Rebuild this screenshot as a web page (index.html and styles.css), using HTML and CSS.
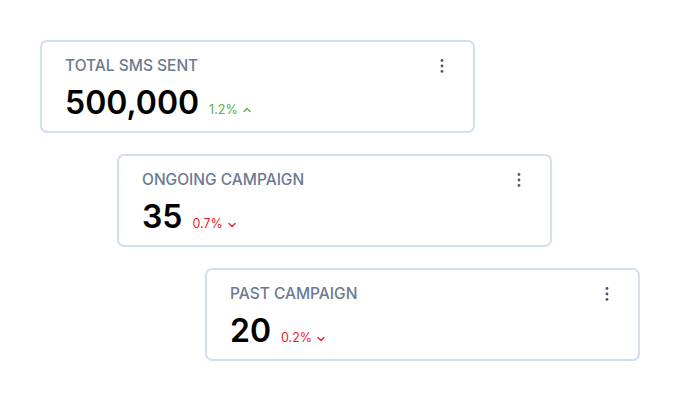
FILE: index.html
```html
<!DOCTYPE html>
<html>
<head>
<meta charset="utf-8">
<link rel="stylesheet" href="styles.css">
</head>
<body>
<div class="stack">
  <div class="card card-1">
    <div class="head">
      <span class="title">TOTAL SMS SENT</span>
      <svg class="more" width="10" height="16" viewBox="0 0 10 16"><circle cx="5" cy="2.5" r="1.4"/><circle cx="5" cy="8" r="1.4"/><circle cx="5" cy="13.4" r="1.4"/></svg>
    </div>
    <div class="value-row">
      <span class="value">500,000</span>
      <span class="delta up">1.2%<svg class="chev" width="8" height="6" viewBox="0 0 8 6"><path d="M1 4.5 L4 1.5 L7 4.5"/></svg></span>
    </div>
  </div>
  <div class="card card-2">
    <div class="head">
      <span class="title">ONGOING CAMPAIGN</span>
      <svg class="more" width="10" height="16" viewBox="0 0 10 16"><circle cx="5" cy="2.5" r="1.4"/><circle cx="5" cy="8" r="1.4"/><circle cx="5" cy="13.4" r="1.4"/></svg>
    </div>
    <div class="value-row">
      <span class="value">35</span>
      <span class="delta down">0.7%<svg class="chev" width="8" height="6" viewBox="0 0 8 6"><path d="M1 1.5 L4 4.5 L7 1.5"/></svg></span>
    </div>
  </div>
  <div class="card card-3">
    <div class="head">
      <span class="title">PAST CAMPAIGN</span>
      <svg class="more" width="10" height="16" viewBox="0 0 10 16"><circle cx="5" cy="2.5" r="1.4"/><circle cx="5" cy="8" r="1.4"/><circle cx="5" cy="13.4" r="1.4"/></svg>
    </div>
    <div class="value-row">
      <span class="value">20</span>
      <span class="delta down">0.2%<svg class="chev" width="8" height="6" viewBox="0 0 8 6"><path d="M1 1.5 L4 4.5 L7 1.5"/></svg></span>
    </div>
  </div>
</div>
</body>
</html>
```

FILE: styles.css
```css
html, body {
  margin: 0;
  padding: 0;
  background: #ffffff;
}
body {
  font-family: Inter, "Noto Sans", sans-serif;
  width: 682px;
  height: 400px;
  overflow: hidden;
}
.stack {
  display: flex;
  flex-direction: column;
  gap: 21px;
  padding-top: 40px;
}
.card {
  width: 435px;
  box-sizing: border-box;
  border: 2px solid #d3deee;
  border-radius: 7px;
  padding: 14px 26px 8px 23px;
  background: #fff;
}
.card-1 { margin-left: 40px; }
.card-2 { margin-left: 117px; }
.card-3 { margin-left: 205px; }
.head {
  display: flex;
  justify-content: space-between;
  align-items: center;
  height: 20px;
}
.title {
  font-size: 15.5px;
  line-height: 20px;
  color: #6b7a92;
  font-weight: 500;
}
.more {
  fill: #4d5669;
}
.value-row {
  display: flex;
  align-items: baseline;
  margin-top: 7px;
  height: 40px;
}
.value {
  font-size: 32px;
  line-height: 40px;
  font-weight: 600;
  color: #000;
}
.delta {
  font-size: 12.5px;
  margin-left: 10px;
  display: inline-flex;
  align-items: baseline;
  gap: 5px;
}
.delta.up { color: #55b146; }
.delta.down { color: #ec1c24; }
.chev {
  fill: none;
  stroke: currentColor;
  stroke-width: 1.3;
  stroke-linecap: round;
  stroke-linejoin: round;
}
.delta.up .chev { position: relative; top: -1px; }
```
